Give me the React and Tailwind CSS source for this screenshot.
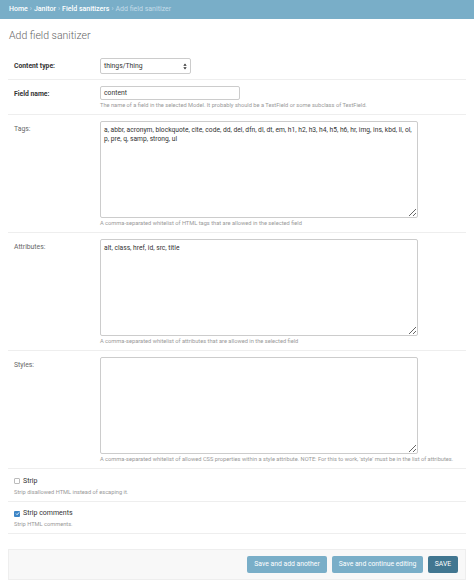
import React from "react";

function Row({ label, bold, children, help }) {
  return (
    <div className="flex border-b border-[#eee] pt-[6px] pb-[5px] px-[6px]">
      <div
        className={
          "w-[86px] shrink-0 text-[6.8px] leading-[16px] " +
          (bold ? "font-bold text-[#333]" : "text-[#666]")
        }
      >
        {label}
      </div>
      <div className="flex flex-col">
        {children}
        {help && (
          <div className="mt-[2px] text-[5.7px] leading-[7px] text-[#999] whitespace-nowrap">
            {help}
          </div>
        )}
      </div>
    </div>
  );
}

function Area({ value }) {
  return (
    <textarea
      readOnly
      defaultValue={value}
      className="w-[318px] h-[97px] border border-[#ccc] rounded-[2px] pl-[3px] pr-[1px] pt-[4px] text-[6.7px] leading-[9px] text-[#333] resize outline-none"
    />
  );
}

function Check({ checked, label, help }) {
  return (
    <div className="border-b border-[#eee] pt-[6px] pb-[5px] px-[6px]">
      <div className="flex items-center h-[12px]">
        {checked ? (
          <div className="w-[6px] h-[6px] rounded-[1px] bg-[#3d85c6] flex items-center justify-center">
            <svg width="5" height="5" viewBox="0 0 10 10">
              <path d="M2 5.2 L4.2 7.4 L8.2 2.8" stroke="#fff" strokeWidth="1.8" fill="none" />
            </svg>
          </div>
        ) : (
          <div className="w-[6px] h-[6px] rounded-[1px] border border-[#bbb] bg-white" />
        )}
        <span className="ml-[3px] text-[7px] text-[#333]">{label}</span>
      </div>
      <div className="mt-[1.5px] text-[5.7px] leading-[7px] text-[#999]">{help}</div>
    </div>
  );
}

export default function App() {
  return (
    <div className="w-[474px] min-h-[588px] bg-white font-['Roboto',sans-serif]">
      <div className="h-[19px] bg-[#79aec8] px-[9px] flex items-center text-[7px] text-[#c4dce8] whitespace-nowrap">
        <span className="text-white font-medium">Home</span>
        <span className="mx-[2px]">›</span>
        <span className="text-white font-medium">Janitor</span>
        <span className="mx-[2px]">›</span>
        <span className="text-white font-medium">Field sanitizers</span>
        <span className="mx-[2px]">›</span>
        <span>Add field sanitizer</span>
      </div>
      <div className="px-[8px]">
        <h1 className="mt-[10px] mb-[9px] pl-[1px] text-[10.5px] leading-[14px] font-light text-[#666]">
          Add field sanitizer
        </h1>
        <Row label="Content type:" bold>
          <div className="w-[91px] h-[16px] border border-[#ccc] rounded-[2px] flex items-center justify-between pl-[3px] pr-[3px] text-[6.8px] text-[#333]">
            <span>things/Thing</span>
            <svg width="4" height="7" viewBox="0 0 4 7">
              <path d="M0.3 2.8 L2 0.6 L3.7 2.8 Z" fill="#333" />
              <path d="M0.3 4.2 L2 6.4 L3.7 4.2 Z" fill="#333" />
            </svg>
          </div>
        </Row>
        <Row
          label="Field name:"
          bold
          help="The name of a field in the selected Model. It probably should be a TextField or some subclass of TextField."
        >
          <div className="w-[140px] h-[14px] border border-[#ccc] rounded-[2px] flex items-center pl-[3px] text-[6.8px] text-[#333]">
            content
          </div>
        </Row>
        <Row label="Tags:" help="A comma-separated whitelist of HTML tags that are allowed in the selected field">
          <Area value="a, abbr, acronym, blockquote, cite, code, dd, del, dfn, dl, dt, em, h1, h2, h3, h4, h5, h6, hr, img, ins, kbd, li, ol, p, pre, q, samp, strong, ul" />
        </Row>
        <Row label="Attributes:" help="A comma-separated whitelist of attributes that are allowed in the selected field">
          <Area value="alt, class, href, id, src, title" />
        </Row>
        <Row
          label="Styles:"
          help="A comma-separated whitelist of allowed CSS properties within a style attribute. NOTE: For this to work, 'style' must be in the list of attributes."
        >
          <Area value="" />
        </Row>
        <Check label="Strip" help="Strip disallowed HTML instead of escaping it." />
        <Check checked label="Strip comments" help="Strip HTML comments." />
        <div className="mt-[15px] h-[31px] bg-[#f8f8f8] border border-[#eee] flex items-center justify-end gap-[5px] pr-[7px]">
          <div className="w-[80px] h-[17px] rounded-[2px] bg-[#79aec8] text-white text-[6.8px] flex items-center justify-center">
            Save and add another
          </div>
          <div className="w-[91px] h-[17px] rounded-[2px] bg-[#79aec8] text-white text-[6.8px] flex items-center justify-center">
            Save and continue editing
          </div>
          <div className="w-[30px] h-[17px] rounded-[2px] bg-[#417690] text-white text-[6.8px] flex items-center justify-center">
            SAVE
          </div>
        </div>
      </div>
    </div>
  );
}
